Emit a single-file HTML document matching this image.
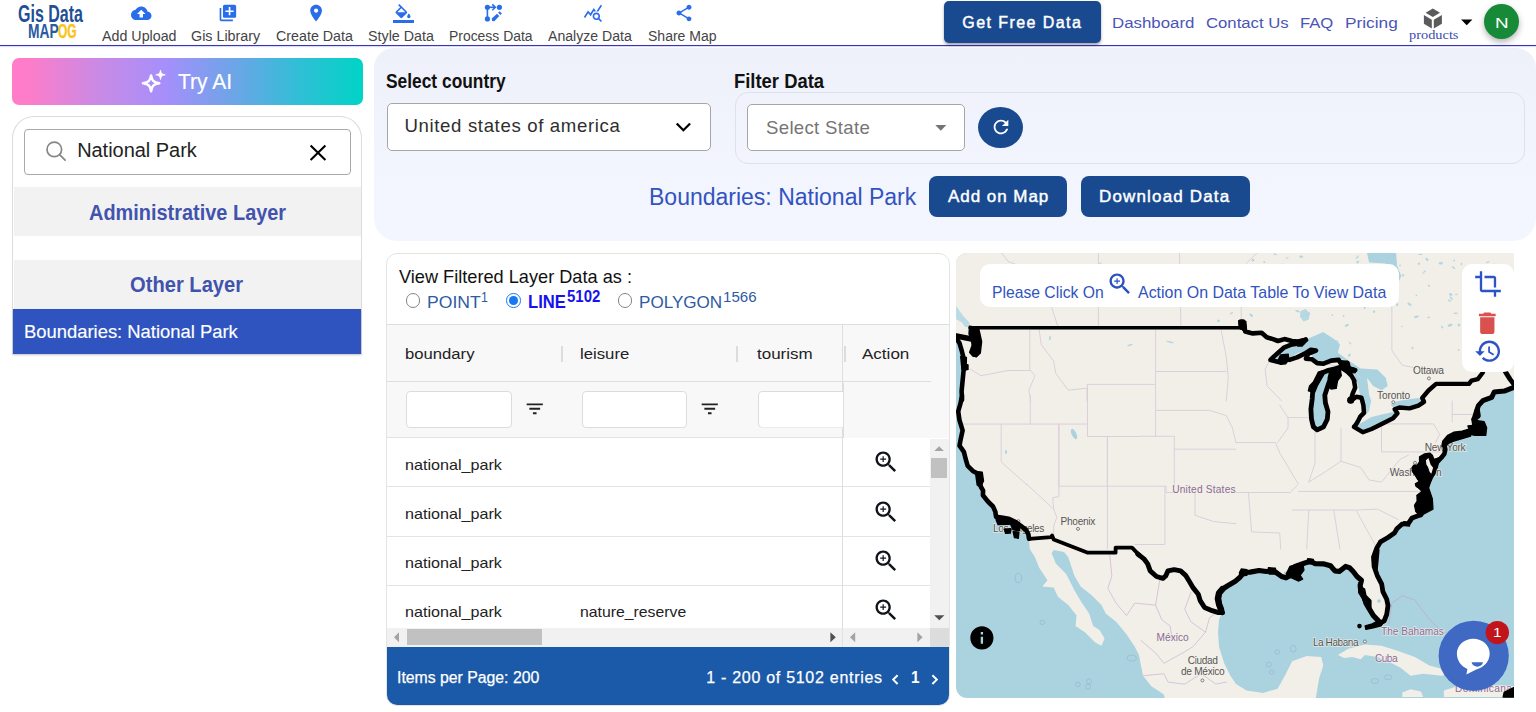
<!DOCTYPE html>
<html lang="en"><head><meta charset="utf-8"><title>GIS Data by MAPOG</title>
<style>
*{box-sizing:border-box}
html,body{margin:0;padding:0}
body{width:1536px;height:712px;overflow:hidden;background:#fff;position:relative;font-family:"Liberation Sans",sans-serif}
.t{position:absolute;white-space:nowrap;line-height:1;transform-origin:0 0;display:block}
.a{position:absolute}
svg{position:absolute;overflow:visible}

</style></head>
<body>
<!-- header -->
<div class="a" style="left:0;top:0;width:1536px;height:45px;background:#fff"></div>
<div class="a" style="left:0;top:44.6px;width:1536px;height:1.9px;background:#3737b6;box-shadow:0 0.5px 1px rgba(56,56,182,.4)"></div>
<!-- top filter panel -->
<div class="a" style="left:374px;top:47.6px;width:1162px;height:193.2px;border-radius:20px 20px 23px 23px;background:linear-gradient(180deg,#eef0fa 0%,#f3f5fe 60%,#f4f6ff 100%)"></div>
<!-- header right -->
<div class="a" style="left:944.2px;top:0.6px;width:156.4px;height:42px;border-radius:5px;background:#194a90;box-shadow:0 2px 3px rgba(0,0,0,.35)"></div>
<div class="a" style="left:1484.2px;top:4.2px;width:35px;height:35px;border-radius:50%;background:#178a38;box-shadow:0 3px 6px rgba(0,0,0,.3)"></div>
<!-- left column -->
<div class="a" style="left:12px;top:57.5px;width:350.5px;height:47.5px;border-radius:7px;background:linear-gradient(90deg,#ff7cc8 0%,#ff7cc8 4%,#c98ae6 25%,#a58ffb 44%,#6aa6e6 64%,#2fbfd6 82%,#00d4c6 100%)"></div>
<div class="a" style="left:12px;top:116px;width:350px;height:239px;border:1.5px solid #dcdcdc;border-bottom:none;border-radius:22px 22px 0 0;background:#fff"></div>
<div class="a" style="left:24px;top:128.6px;width:326.6px;height:46.4px;border:1px solid #a9a9a9;border-radius:4px;background:#fff"></div>
<div class="a" style="left:13.5px;top:187px;width:347.6px;height:49px;background:#f2f2f2"></div>
<div class="a" style="left:13.5px;top:260px;width:347.6px;height:49px;background:#f2f2f2"></div>
<div class="a" style="left:13px;top:309px;width:348.4px;height:45.4px;background:#3054bf;box-shadow:0 1px 2px rgba(0,0,0,.25)"></div>
<!-- select country -->
<div class="a" style="left:386.6px;top:103.4px;width:324.4px;height:47.2px;border:1px solid #a6a6a6;border-radius:5px;background:#fff"></div>
<!-- filter container -->
<div class="a" style="left:735.4px;top:92.2px;width:789.6px;height:71.4px;border:1px solid #dfe1ea;border-radius:13px"></div>
<div class="a" style="left:747.4px;top:104.4px;width:217.4px;height:46.8px;border:1px solid #a6a6a6;border-radius:5px;background:#fff"></div>
<div class="a" style="left:978.3px;top:106.9px;width:44.8px;height:41.2px;border-radius:50%;background:#194a90"></div>
<div class="a" style="left:929px;top:176.1px;width:138.2px;height:40.6px;border-radius:8px;background:#194a90"></div>
<div class="a" style="left:1080.8px;top:176.1px;width:168.8px;height:40.6px;border-radius:8px;background:#194a90"></div>
<!-- table card -->
<div class="a" style="left:386.2px;top:253px;width:563.6px;height:452.6px;border:1px solid #e4e4e4;border-radius:11px;background:#fff;overflow:hidden">
  <div class="a" style="left:0;top:70.4px;width:562px;height:114px;background:#f8f8f8;border-top:1px solid #dedede"></div>
  <div class="a" style="left:0;top:126.8px;width:544px;height:1px;background:#dedede"></div>
  <div class="a" style="left:0;top:183.1px;width:562px;height:1.2px;background:#e2e2e2"></div>
  <div class="a" style="left:0;top:232.3px;width:544px;height:1.2px;background:#e4e4e4"></div>
  <div class="a" style="left:0;top:281.5px;width:544px;height:1.2px;background:#e4e4e4"></div>
  <div class="a" style="left:0;top:330.7px;width:544px;height:1.2px;background:#e4e4e4"></div>
  <div class="a" style="left:455.2px;top:71px;width:1px;height:304px;background:#dedede"></div>
  <!-- header separators -->
  <div class="a" style="left:173.6px;top:92px;width:2px;height:16.4px;background:#dcdcdc"></div>
  <div class="a" style="left:348.6px;top:92px;width:2px;height:16.4px;background:#dcdcdc"></div>
  <div class="a" style="left:457px;top:92px;width:2px;height:16.4px;background:#dcdcdc"></div>
  <!-- filter inputs -->
  <div class="a" style="left:19.2px;top:136.6px;width:105.4px;height:37px;border:1px solid #dcdcdc;border-radius:4px;background:#fff"></div>
  <div class="a" style="left:194.4px;top:136.6px;width:105.4px;height:37px;border:1px solid #dcdcdc;border-radius:4px;background:#fff"></div>
  <div class="a" style="left:370.8px;top:136.6px;width:90px;height:37px;border:1px solid #dcdcdc;border-radius:4px 0 0 4px;background:#fff;clip-path:inset(0 5px 0 0)"></div>
  <div class="a" style="left:455.4px;top:128.6px;width:107px;height:55px;background:#f8f8f8;border-left:1px solid #dedede"></div>
  <!-- scrollbars -->
  <div class="a" style="left:543px;top:184.8px;width:19.2px;height:190px;background:#f1f1f1"></div>
  <div class="a" style="left:543.9px;top:204.2px;width:16.2px;height:19.4px;background:#c1c1c1"></div>
  <div class="a" style="left:0;top:374px;width:562px;height:19.4px;background:#f1f1f1"></div>
  <div class="a" style="left:19.8px;top:375px;width:134.8px;height:15.8px;background:#c1c1c1"></div>
  <div class="a" style="left:455.2px;top:374px;width:1px;height:19px;background:#e2e2e2"></div>
  <div class="a" style="left:543px;top:374px;width:19.2px;height:19.4px;background:#dcdcdc"></div>
  <!-- footer -->
  <div class="a" style="left:-1px;top:392.9px;width:566px;height:60px;background:#1b5aa8"></div>
</div>
<!-- map -->
<div class="a" style="left:956px;top:253px;width:557.7px;height:445.3px;border-radius:11px 0 0 11px;overflow:hidden;background:#aad3df">
<svg class="a" style="left:0;top:0" width="557.7" height="445.3" viewBox="956 253 557.7 445.3">
<path d="M955.0,252.0 L1515.0,252.0 L1515.0,386.0 L1513.8,387.3 L1504.3,391.1 L1494.2,392.0 L1491.7,397.4 L1482.9,400.6 L1478.4,405.6 L1475.9,413.2 L1474.0,419.5 L1477.2,423.1 L1476.0,420.0 L1470.0,432.0 L1462.0,436.0 L1471.5,430.2 L1463.9,433.4 L1453.8,435.9 L1444.9,440.3 L1444.9,439.7 L1443.7,442.9 L1444.9,450.5 L1442.4,456.8 L1437.3,461.8 L1433.6,464.4 L1434.2,469.4 L1432.9,475.7 L1428.5,485.9 L1427.2,490.9 L1431.0,500.0 L1432.3,499.0 L1432.9,509.1 L1423.4,514.1 L1420.9,514.8 L1412.1,517.9 L1408.3,523.6 L1401.9,524.2 L1396.9,528.7 L1394.4,533.1 L1388.0,537.5 L1380.5,541.9 L1376.7,548.3 L1373.5,557.1 L1374.1,566.0 L1375.4,570.0 L1377.2,550.0 L1374.1,557.6 L1374.1,566.4 L1377.2,575.3 L1381.7,584.1 L1382.9,591.7 L1386.7,599.3 L1388.0,605.6 L1386.7,614.5 L1384.2,620.8 L1378.5,624.0 L1378.5,620.8 L1373.4,615.7 L1369.6,609.4 L1365.9,603.1 L1364.0,596.8 L1360.8,591.7 L1360.2,585.4 L1361.4,580.3 L1357.0,576.5 L1353.2,571.5 L1349.4,567.7 L1345.6,566.4 L1339.3,571.5 L1334.9,570.9 L1330.5,565.8 L1324.1,563.9 L1315.3,563.7 L1310.2,561.1 L1301.4,564.2 L1295.1,566.4 L1294.3,569.0 L1291.8,574.7 L1286.1,577.8 L1281.7,576.5 L1276.6,572.8 L1272.9,570.5 L1266.5,571.5 L1259.0,570.5 L1250.1,572.1 L1243.8,572.5 L1240.0,577.2 L1234.9,581.6 L1227.3,586.0 L1222.3,589.2 L1219.1,593.0 L1218.5,598.0 L1219.1,604.4 L1221.0,609.4 L1222.3,612.6 L1222.1,612.4 L1219.0,619.7 L1218.0,632.2 L1219.0,646.7 L1224.2,663.3 L1230.4,675.8 L1236.0,684.1 L1246.4,690.4 L1263.0,692.9 L1277.6,688.7 L1284.9,675.8 L1292.1,661.3 L1306.7,656.1 L1321.2,657.1 L1323.3,665.4 L1319.2,677.9 L1316.0,697.0 L1316.0,702.8 L1285.0,700.0 L1160.0,700.0 L1166.0,702.8 L1163.9,694.5 L1151.4,686.2 L1143.1,675.8 L1141.0,665.4 L1139.0,655.0 L1134.8,646.7 L1126.5,634.2 L1116.1,621.8 L1105.7,613.4 L1101.5,605.1 L1091.1,594.7 L1080.7,586.4 L1074.5,576.0 L1068.3,557.3 L1064.1,552.1 L1053.7,550.0 L1051.6,553.2 L1055.8,563.6 L1066.2,573.9 L1071.4,584.3 L1074.5,590.6 L1080.7,601.0 L1089.1,613.4 L1093.2,625.9 L1099.5,630.1 L1104.6,638.4 L1101.5,645.7 L1095.3,642.6 L1084.9,632.2 L1075.5,625.9 L1076.6,615.5 L1068.3,605.1 L1057.9,596.8 L1053.7,587.5 L1042.3,586.4 L1047.5,580.2 L1039.2,567.7 L1035.0,557.3 L1029.8,549.0 L1029.0,538.8 L1028.4,534.4 L1025.9,529.9 L1020.8,525.8 L1015.7,522.0 L1008.4,518.7 L1003.1,517.9 L996.1,516.9 L995.3,511.6 L993.0,506.5 L987.9,501.5 L982.9,495.2 L983.1,490.7 L981.0,487.0 L979.7,482.5 L979.7,485.0 L978.4,474.0 L972.8,470.9 L967.7,465.8 L965.8,459.5 L963.9,451.9 L959.5,445.6 L960.7,439.2 L962.6,430.4 L959.5,420.3 L958.2,411.4 L960.7,402.6 L962.0,395.0 L962.0,400.0 L961.6,390.9 L962.6,380.8 L963.7,369.4 L963.3,357.0 L962.0,351.7 L959.5,343.1 L956.1,338.1 L955.0,336.0Z" fill="#f2efe9" />
<path d="M1306.7,339.3 L1323.3,332.0 L1335.8,340.3 L1340.0,344.5 L1337.9,352.8 L1349.3,361.1 L1340.0,359.0 L1323.3,363.2 L1315.0,361.1 L1308.8,350.7 L1298.4,352.8 L1288.0,359.0 L1275.5,361.1 L1270.3,360.1 L1285.9,346.6Z" fill="#aad3df" />
<path d="M1329.9,380.0 L1327.3,387.6 L1324.8,395.2 L1325.4,402.8 L1328.0,411.6 L1327.3,419.2 L1323.6,426.8 L1317.2,429.9 L1313.4,426.8 L1311.5,419.2 L1310.9,409.1 L1312.2,399.0 L1312.8,390.1 L1317.2,380.0 L1322.3,372.4 L1331.1,369.9Z" fill="#aad3df" />
<path d="M1349.3,361.1 L1360.7,368.4 L1377.4,369.4 L1385.7,377.7 L1387.8,386.1 L1381.5,390.2 L1373.2,386.1 L1367.0,377.7 L1369.1,394.4 L1371.1,401.0 L1369.1,411.0 L1362.8,417.2 L1360.7,401.0 L1358.7,388.1 L1355.5,377.7 L1352.4,371.5Z" fill="#aad3df" />
<path d="M1356.4,425.9 L1362.8,422.1 L1371.6,417.0 L1381.7,414.5 L1393.1,411.9 L1397.5,413.2 L1393.1,418.3 L1381.7,424.0 L1371.6,429.0 L1362.8,432.2Z" fill="#aad3df" />
<path d="M1390.6,404.4 L1396.9,401.2 L1408.3,399.3 L1418.4,398.0 L1422.2,398.0 L1424.1,401.8 L1418.4,405.6 L1409.5,408.4 L1399.4,407.5 L1394.6,409.2Z" fill="#aad3df" />
<path d="M1367.0,253.0 L1396.1,253.0 L1397.1,265.5 L1401.3,275.9 L1399.2,281.1 L1394.0,271.7 L1385.7,263.4 L1369.1,262.4Z" fill="#aad3df" />
<path d="M1300.4,311.2 L1305.6,309.1 L1309.8,313.3 L1308.8,319.5 L1303.6,321.6 L1300.0,316.4Z" fill="#b5d8e2" />
<path d="M1337.9,655.0 L1348.3,648.8 L1364.9,644.6 L1381.5,645.7 L1398.2,650.9 L1414.8,657.1 L1429.3,665.4 L1443.9,669.6 L1452.2,673.7 L1441.8,675.8 L1423.1,673.7 L1410.6,675.8 L1400.2,667.5 L1387.8,661.3 L1377.4,657.1 L1364.9,655.0 L1360.7,659.2 L1352.4,657.1 L1344.1,658.1Z" fill="#f2efe9" />
<path d="M1402.3,692.5 L1410.6,689.3 L1421.0,691.4 L1423.1,697.0 L1402.3,697.0Z" fill="#f2efe9" />
<path d="M1443.9,690.4 L1464.7,684.1 L1514.6,686.2 L1514.6,697.0 L1443.9,697.0Z" fill="#f2efe9" />
<ellipse cx="1282.2" cy="264.3" rx="2.0" ry="0.6" fill="#b3d7e2" transform="rotate(4 1282.2 264.3)"/>
<ellipse cx="1287.1" cy="257.9" rx="1.7" ry="0.5" fill="#b3d7e2" transform="rotate(-8 1287.1 257.9)"/>
<ellipse cx="1253.0" cy="260.2" rx="1.6" ry="1.2" fill="#b3d7e2" transform="rotate(-45 1253.0 260.2)"/>
<ellipse cx="1270.7" cy="296.7" rx="2.5" ry="1.0" fill="#b3d7e2" transform="rotate(-12 1270.7 296.7)"/>
<ellipse cx="1357.3" cy="257.2" rx="2.3" ry="0.7" fill="#b3d7e2" transform="rotate(-43 1357.3 257.2)"/>
<ellipse cx="1258.5" cy="275.0" rx="2.3" ry="0.6" fill="#b3d7e2" transform="rotate(10 1258.5 275.0)"/>
<ellipse cx="1318.5" cy="279.3" rx="1.8" ry="0.6" fill="#b3d7e2" transform="rotate(-53 1318.5 279.3)"/>
<ellipse cx="1268.7" cy="300.3" rx="1.6" ry="0.8" fill="#b3d7e2" transform="rotate(10 1268.7 300.3)"/>
<ellipse cx="1297.1" cy="274.4" rx="2.2" ry="1.1" fill="#b3d7e2" transform="rotate(-31 1297.1 274.4)"/>
<ellipse cx="1311.1" cy="289.7" rx="2.4" ry="1.1" fill="#b3d7e2" transform="rotate(-25 1311.1 289.7)"/>
<ellipse cx="1357.7" cy="262.0" rx="1.6" ry="1.1" fill="#b3d7e2" transform="rotate(-42 1357.7 262.0)"/>
<ellipse cx="1301.2" cy="256.7" rx="2.0" ry="1.1" fill="#b3d7e2" transform="rotate(9 1301.2 256.7)"/>
<ellipse cx="1345.7" cy="275.3" rx="2.1" ry="1.0" fill="#b3d7e2" transform="rotate(10 1345.7 275.3)"/>
<ellipse cx="1297.5" cy="311.1" rx="2.5" ry="0.9" fill="#b3d7e2" transform="rotate(20 1297.5 311.1)"/>
<ellipse cx="1252.0" cy="301.7" rx="2.0" ry="1.3" fill="#b3d7e2" transform="rotate(39 1252.0 301.7)"/>
<ellipse cx="1277.7" cy="280.2" rx="2.0" ry="0.5" fill="#b3d7e2" transform="rotate(-5 1277.7 280.2)"/>
<ellipse cx="1264.3" cy="262.0" rx="0.9" ry="1.1" fill="#b3d7e2" transform="rotate(-44 1264.3 262.0)"/>
<ellipse cx="1273.5" cy="280.6" rx="2.4" ry="0.6" fill="#b3d7e2" transform="rotate(-6 1273.5 280.6)"/>
<ellipse cx="1308.2" cy="314.1" rx="2.3" ry="1.2" fill="#b3d7e2" transform="rotate(-27 1308.2 314.1)"/>
<ellipse cx="1292.8" cy="278.4" rx="2.4" ry="1.3" fill="#b3d7e2" transform="rotate(-42 1292.8 278.4)"/>
<ellipse cx="1265.3" cy="269.8" rx="1.2" ry="0.9" fill="#b3d7e2" transform="rotate(11 1265.3 269.8)"/>
<ellipse cx="1275.2" cy="254.3" rx="1.6" ry="0.8" fill="#b3d7e2" transform="rotate(8 1275.2 254.3)"/>
<ellipse cx="1354.6" cy="301.0" rx="1.7" ry="1.0" fill="#b3d7e2" transform="rotate(21 1354.6 301.0)"/>
<ellipse cx="1251.2" cy="315.2" rx="2.2" ry="1.2" fill="#b3d7e2" transform="rotate(36 1251.2 315.2)"/>
<ellipse cx="1290.1" cy="281.1" rx="1.0" ry="1.0" fill="#b3d7e2" transform="rotate(-53 1290.1 281.1)"/>
<ellipse cx="1252.7" cy="268.2" rx="1.1" ry="0.8" fill="#b3d7e2" transform="rotate(-54 1252.7 268.2)"/>
<ellipse cx="1400.0" cy="265.5" rx="1.0" ry="0.8" fill="#b3d7e2" transform="rotate(-57 1400.0 265.5)"/>
<ellipse cx="1497.9" cy="300.7" rx="1.1" ry="0.7" fill="#b3d7e2" transform="rotate(-18 1497.9 300.7)"/>
<ellipse cx="1440.8" cy="263.3" rx="2.3" ry="1.3" fill="#b3d7e2" transform="rotate(-4 1440.8 263.3)"/>
<ellipse cx="1454.2" cy="260.5" rx="1.0" ry="0.8" fill="#b3d7e2" transform="rotate(-28 1454.2 260.5)"/>
<ellipse cx="1492.8" cy="266.3" rx="0.8" ry="1.3" fill="#b3d7e2" transform="rotate(3 1492.8 266.3)"/>
<ellipse cx="1416.4" cy="295.3" rx="0.8" ry="0.9" fill="#b3d7e2" transform="rotate(57 1416.4 295.3)"/>
<ellipse cx="1496.7" cy="306.9" rx="1.3" ry="0.8" fill="#b3d7e2" transform="rotate(-40 1496.7 306.9)"/>
<ellipse cx="1486.5" cy="294.5" rx="2.2" ry="0.8" fill="#b3d7e2" transform="rotate(-33 1486.5 294.5)"/>
<ellipse cx="1490.9" cy="328.9" rx="2.3" ry="1.1" fill="#b3d7e2" transform="rotate(38 1490.9 328.9)"/>
<ellipse cx="1482.9" cy="271.2" rx="1.7" ry="0.8" fill="#b3d7e2" transform="rotate(-57 1482.9 271.2)"/>
<ellipse cx="1403.1" cy="275.2" rx="1.3" ry="1.1" fill="#b3d7e2" transform="rotate(55 1403.1 275.2)"/>
<ellipse cx="1450.1" cy="325.2" rx="2.6" ry="1.3" fill="#b3d7e2" transform="rotate(-16 1450.1 325.2)"/>
<ellipse cx="1424.7" cy="271.2" rx="1.2" ry="0.7" fill="#b3d7e2" transform="rotate(15 1424.7 271.2)"/>
<ellipse cx="1500.8" cy="317.9" rx="1.7" ry="1.0" fill="#b3d7e2" transform="rotate(36 1500.8 317.9)"/>
<ellipse cx="1409.5" cy="304.2" rx="2.4" ry="1.1" fill="#b3d7e2" transform="rotate(30 1409.5 304.2)"/>
<ellipse cx="1453.5" cy="267.6" rx="2.2" ry="0.8" fill="#b3d7e2" transform="rotate(36 1453.5 267.6)"/>
<ellipse cx="1508.8" cy="284.1" rx="1.5" ry="1.3" fill="#b3d7e2" transform="rotate(27 1508.8 284.1)"/>
<ellipse cx="1419.0" cy="263.7" rx="1.1" ry="1.2" fill="#b3d7e2" transform="rotate(37 1419.0 263.7)"/>
<ellipse cx="1416.4" cy="316.8" rx="2.6" ry="1.0" fill="#b3d7e2" transform="rotate(-18 1416.4 316.8)"/>
<ellipse cx="1461.4" cy="264.0" rx="0.8" ry="1.3" fill="#b3d7e2" transform="rotate(18 1461.4 264.0)"/>
<ellipse cx="1459.0" cy="325.0" rx="1.6" ry="1.2" fill="#b3d7e2" transform="rotate(39 1459.0 325.0)"/>
<ellipse cx="1423.6" cy="273.1" rx="1.3" ry="0.7" fill="#b3d7e2" transform="rotate(10 1423.6 273.1)"/>
<ellipse cx="1429.0" cy="285.8" rx="1.0" ry="1.2" fill="#b3d7e2" transform="rotate(-18 1429.0 285.8)"/>
<ellipse cx="1451.3" cy="298.3" rx="2.4" ry="0.8" fill="#b3d7e2" transform="rotate(50 1451.3 298.3)"/>
<ellipse cx="1456.2" cy="294.4" rx="1.7" ry="0.5" fill="#b3d7e2" transform="rotate(-7 1456.2 294.4)"/>
<ellipse cx="1420.5" cy="254.3" rx="2.2" ry="0.6" fill="#b3d7e2" transform="rotate(-3 1420.5 254.3)"/>
<ellipse cx="1481.2" cy="296.3" rx="1.4" ry="0.9" fill="#b3d7e2" transform="rotate(7 1481.2 296.3)"/>
<ellipse cx="1487.8" cy="262.1" rx="1.8" ry="0.7" fill="#b3d7e2" transform="rotate(-27 1487.8 262.1)"/>
<ellipse cx="1486.5" cy="292.6" rx="1.8" ry="1.1" fill="#b3d7e2" transform="rotate(49 1486.5 292.6)"/>
<ellipse cx="1449.6" cy="300.6" rx="1.7" ry="0.9" fill="#b3d7e2" transform="rotate(23 1449.6 300.6)"/>
<ellipse cx="1450.7" cy="294.5" rx="1.7" ry="1.3" fill="#b3d7e2" transform="rotate(24 1450.7 294.5)"/>
<ellipse cx="1498.2" cy="325.6" rx="1.3" ry="0.9" fill="#b3d7e2" transform="rotate(53 1498.2 325.6)"/>
<ellipse cx="1494.1" cy="264.4" rx="1.0" ry="0.9" fill="#b3d7e2" transform="rotate(-51 1494.1 264.4)"/>
<ellipse cx="1427.0" cy="259.6" rx="2.0" ry="1.1" fill="#b3d7e2" transform="rotate(48 1427.0 259.6)"/>
<ellipse cx="1350.1" cy="343.0" rx="2.0" ry="0.6" fill="#b3d7e2" transform="rotate(46 1350.1 343.0)"/>
<ellipse cx="1455.8" cy="313.2" rx="2.5" ry="0.8" fill="#b3d7e2" transform="rotate(-2 1455.8 313.2)"/>
<ellipse cx="1458.7" cy="349.9" rx="1.1" ry="0.8" fill="#b3d7e2" transform="rotate(2 1458.7 349.9)"/>
<ellipse cx="1374.1" cy="311.7" rx="1.4" ry="1.1" fill="#b3d7e2" transform="rotate(-58 1374.1 311.7)"/>
<ellipse cx="1402.0" cy="326.4" rx="0.8" ry="0.8" fill="#b3d7e2" transform="rotate(15 1402.0 326.4)"/>
<ellipse cx="1396.6" cy="303.9" rx="2.6" ry="1.1" fill="#b3d7e2" transform="rotate(57 1396.6 303.9)"/>
<ellipse cx="1343.6" cy="315.9" rx="0.9" ry="1.1" fill="#b3d7e2" transform="rotate(-28 1343.6 315.9)"/>
<ellipse cx="1346.8" cy="325.3" rx="2.4" ry="1.2" fill="#b3d7e2" transform="rotate(-29 1346.8 325.3)"/>
<ellipse cx="1349.4" cy="355.2" rx="1.8" ry="1.1" fill="#b3d7e2" transform="rotate(-49 1349.4 355.2)"/>
<ellipse cx="1337.5" cy="341.3" rx="1.6" ry="0.6" fill="#b3d7e2" transform="rotate(53 1337.5 341.3)"/>
<ellipse cx="1412.5" cy="348.1" rx="1.0" ry="1.2" fill="#b3d7e2" transform="rotate(-52 1412.5 348.1)"/>
<ellipse cx="1442.2" cy="327.2" rx="1.4" ry="0.9" fill="#b3d7e2" transform="rotate(51 1442.2 327.2)"/>
<ellipse cx="1364.8" cy="307.8" rx="1.7" ry="0.7" fill="#b3d7e2" transform="rotate(-47 1364.8 307.8)"/>
<ellipse cx="1351.0" cy="303.0" rx="1.2" ry="0.7" fill="#b3d7e2" transform="rotate(-23 1351.0 303.0)"/>
<ellipse cx="1428.7" cy="317.4" rx="1.7" ry="0.6" fill="#b3d7e2" transform="rotate(-18 1428.7 317.4)"/>
<ellipse cx="1332.4" cy="315.0" rx="0.8" ry="1.1" fill="#b3d7e2" transform="rotate(6 1332.4 315.0)"/>
<ellipse cx="1176.1" cy="286.3" rx="2.5" ry="0.6" fill="#b3d7e2" transform="rotate(38 1176.1 286.3)"/>
<ellipse cx="1196.7" cy="287.7" rx="2.3" ry="0.8" fill="#b3d7e2" transform="rotate(1 1196.7 287.7)"/>
<ellipse cx="1218.5" cy="320.8" rx="1.4" ry="1.2" fill="#b3d7e2" transform="rotate(25 1218.5 320.8)"/>
<ellipse cx="1214.1" cy="281.5" rx="1.4" ry="0.5" fill="#b3d7e2" transform="rotate(-44 1214.1 281.5)"/>
<ellipse cx="1166.0" cy="304.4" rx="1.3" ry="0.6" fill="#b3d7e2" transform="rotate(-50 1166.0 304.4)"/>
<ellipse cx="1231.5" cy="313.2" rx="2.0" ry="0.7" fill="#b3d7e2" transform="rotate(-31 1231.5 313.2)"/>
<ellipse cx="1184.9" cy="285.2" rx="1.1" ry="0.9" fill="#b3d7e2" transform="rotate(-28 1184.9 285.2)"/>
<ellipse cx="1155.4" cy="298.7" rx="1.8" ry="0.7" fill="#b3d7e2" transform="rotate(56 1155.4 298.7)"/>
<ellipse cx="1077.1" cy="270.4" rx="0.8" ry="0.8" fill="#b3d7e2" transform="rotate(-3 1077.1 270.4)"/>
<ellipse cx="1100.3" cy="263.2" rx="1.7" ry="0.5" fill="#b3d7e2" transform="rotate(-28 1100.3 263.2)"/>
<ellipse cx="1050.8" cy="272.4" rx="0.9" ry="0.5" fill="#b3d7e2" transform="rotate(-23 1050.8 272.4)"/>
<ellipse cx="1067.9" cy="280.9" rx="1.8" ry="1.1" fill="#b3d7e2" transform="rotate(19 1067.9 280.9)"/>
<ellipse cx="1074.0" cy="434.0" rx="2.4" ry="5.6" fill="#aad3df" transform="rotate(-25 1074.0 434.0)"/>
<ellipse cx="1379.0" cy="601.0" rx="1.8" ry="1.8" fill="#aad3df" transform="rotate(0 1379.0 601.0)"/>
<ellipse cx="1006.0" cy="452.0" rx="1.2" ry="2.0" fill="#b3d7e2" transform="rotate(0 1006.0 452.0)"/>
<ellipse cx="1286.0" cy="573.0" rx="2.2" ry="1.4" fill="#aad3df" transform="rotate(0 1286.0 573.0)"/>
<ellipse cx="1130.0" cy="345.0" rx="3.0" ry="0.8" fill="#b3d7e2" transform="rotate(-20 1130.0 345.0)"/>
<ellipse cx="1170.0" cy="342.0" rx="4.0" ry="0.8" fill="#b3d7e2" transform="rotate(15 1170.0 342.0)"/>
<ellipse cx="1050.0" cy="338.0" rx="0.9" ry="2.4" fill="#b3d7e2" transform="rotate(10 1050.0 338.0)"/>
<path d="M956.1,305.4 L960.1,311.7 L963.9,316.8 L969.0,321.9 L970.2,326.9 L965.2,326.9 L961.4,321.9 L956.1,319.3Z" fill="#b9dbe5" />
<path d="M956.1,339.3 L957.8,343.1 L960.4,351.7 L961.6,357.0 L962.0,369.4 L961.1,380.8 L960.1,390.9 L960.4,401.0 L955.1,401.0 L955.1,339.3Z" fill="#aad3df" />
<path d="M962.6,424.1 L1087.8,424.1" fill="none" stroke="#dccfdc" stroke-width="1" stroke-linejoin="round" stroke-linecap="round" />
<path d="M1030.3,395.0 L1030.3,424.1" fill="none" stroke="#dccfdc" stroke-width="1" stroke-linejoin="round" stroke-linecap="round" />
<path d="M1001.2,424.1 L1001.2,462.0 L1027.1,485.0" fill="none" stroke="#dccfdc" stroke-width="1" stroke-linejoin="round" stroke-linecap="round" />
<path d="M1058.7,424.1 L1058.7,485.0" fill="none" stroke="#dccfdc" stroke-width="1" stroke-linejoin="round" stroke-linecap="round" />
<path d="M1087.5,384.9 L1087.5,436.5 L1140.0,436.5" fill="none" stroke="#dccfdc" stroke-width="1" stroke-linejoin="round" stroke-linecap="round" />
<path d="M1107.4,436.5 L1107.4,485.0" fill="none" stroke="#dccfdc" stroke-width="1" stroke-linejoin="round" stroke-linecap="round" />
<path d="M1058.9,423.9 L1058.9,496.6 L1052.7,497.7 L1053.7,509.1 L1056.8,517.4 L1053.7,525.7 L1053.7,536.1" fill="none" stroke="#dccfdc" stroke-width="1" stroke-linejoin="round" stroke-linecap="round" />
<path d="M1058.9,486.2 L1166.0,486.2 L1166.0,492.5 L1174.3,492.5" fill="none" stroke="#dccfdc" stroke-width="1" stroke-linejoin="round" stroke-linecap="round" />
<path d="M1107.4,436.3 L1107.4,549.0" fill="none" stroke="#dccfdc" stroke-width="1" stroke-linejoin="round" stroke-linecap="round" />
<path d="M1174.3,436.3 L1174.3,486.2" fill="none" stroke="#dccfdc" stroke-width="1" stroke-linejoin="round" stroke-linecap="round" />
<path d="M1174.3,449.2 L1236.0,449.2" fill="none" stroke="#dccfdc" stroke-width="1" stroke-linejoin="round" stroke-linecap="round" />
<path d="M1164.9,486.2 L1164.9,544.5 L1134.8,544.5" fill="none" stroke="#dccfdc" stroke-width="1" stroke-linejoin="round" stroke-linecap="round" />
<path d="M1155.6,401.0 L1155.6,436.3" fill="none" stroke="#dccfdc" stroke-width="1" stroke-linejoin="round" stroke-linecap="round" />
<path d="M1155.6,410.4 L1209.6,410.4 L1226.3,415.6 L1232.5,428.0 L1236.0,442.6" fill="none" stroke="#dccfdc" stroke-width="1" stroke-linejoin="round" stroke-linecap="round" />
<path d="M1195.1,492.5 L1195.1,515.3 L1213.8,521.6 L1236.0,523.7" fill="none" stroke="#dccfdc" stroke-width="1" stroke-linejoin="round" stroke-linecap="round" />
<path d="M1026.7,484.2 L1053.7,509.1" fill="none" stroke="#dccfdc" stroke-width="1" stroke-linejoin="round" stroke-linecap="round" />
<path d="M1140.0,436.3 L1174.3,436.3" fill="none" stroke="#dccfdc" stroke-width="1" stroke-linejoin="round" stroke-linecap="round" />
<path d="M1029.8,329.9 L1029.8,369.4 L1035.0,375.7 L1028.8,390.2 L1030.8,401.0" fill="none" stroke="#dccfdc" stroke-width="1" stroke-linejoin="round" stroke-linecap="round" />
<path d="M970.6,369.4 L980.9,375.7 L1008.0,370.5 L1029.8,370.5" fill="none" stroke="#dccfdc" stroke-width="1" stroke-linejoin="round" stroke-linecap="round" />
<path d="M1039.2,329.9 L1041.2,344.5 L1053.7,361.1 L1055.8,373.6 L1068.3,390.2 L1087.0,388.1 L1087.0,401.0" fill="none" stroke="#dccfdc" stroke-width="1" stroke-linejoin="round" stroke-linecap="round" />
<path d="M1087.0,384.4 L1155.6,384.4" fill="none" stroke="#dccfdc" stroke-width="1" stroke-linejoin="round" stroke-linecap="round" />
<path d="M1155.6,329.9 L1155.6,401.0" fill="none" stroke="#dccfdc" stroke-width="1" stroke-linejoin="round" stroke-linecap="round" />
<path d="M1155.6,371.5 L1226.3,371.5" fill="none" stroke="#dccfdc" stroke-width="1" stroke-linejoin="round" stroke-linecap="round" />
<path d="M1221.1,329.9 L1226.3,357.0 L1228.3,377.7 L1226.3,401.0" fill="none" stroke="#dccfdc" stroke-width="1" stroke-linejoin="round" stroke-linecap="round" />
<path d="M1098.4,253.0 L1098.4,326.8" fill="none" stroke="#dccfdc" stroke-width="1" stroke-linejoin="round" stroke-linecap="round" />
<path d="M1179.5,253.0 L1180.9,326.8" fill="none" stroke="#dccfdc" stroke-width="1" stroke-linejoin="round" stroke-linecap="round" />
<path d="M1001.7,253.0 L1008.0,261.3 L1018.4,265.5 L1051.6,307.1 L1057.9,326.8" fill="none" stroke="#dccfdc" stroke-width="1" stroke-linejoin="round" stroke-linecap="round" />
<path d="M1236.0,442.6 L1275.5,442.6 L1279.7,453.0 L1298.4,484.2 L1290.1,492.5 L1236.0,492.5" fill="none" stroke="#dccfdc" stroke-width="1" stroke-linejoin="round" stroke-linecap="round" />
<path d="M1279.7,405.2 L1288.0,417.6 L1288.0,428.0 L1277.6,442.6" fill="none" stroke="#dccfdc" stroke-width="1" stroke-linejoin="round" stroke-linecap="round" />
<path d="M1288.0,417.6 L1310.8,417.6" fill="none" stroke="#dccfdc" stroke-width="1" stroke-linejoin="round" stroke-linecap="round" />
<path d="M1315.0,430.1 L1315.0,463.4 L1308.8,482.1" fill="none" stroke="#dccfdc" stroke-width="1" stroke-linejoin="round" stroke-linecap="round" />
<path d="M1341.0,428.0 L1341.0,461.3 L1325.4,471.7 L1308.8,482.1" fill="none" stroke="#dccfdc" stroke-width="1" stroke-linejoin="round" stroke-linecap="round" />
<path d="M1381.5,423.9 L1381.5,451.9 L1443.9,451.9" fill="none" stroke="#dccfdc" stroke-width="1" stroke-linejoin="round" stroke-linecap="round" />
<path d="M1381.5,423.9 L1433.5,423.9 L1439.7,434.3 L1435.6,442.6" fill="none" stroke="#dccfdc" stroke-width="1" stroke-linejoin="round" stroke-linecap="round" />
<path d="M1341.0,461.3 L1360.7,467.5 L1369.1,480.0 L1381.5,482.1 L1400.2,459.2 L1408.6,455.1" fill="none" stroke="#dccfdc" stroke-width="1" stroke-linejoin="round" stroke-linecap="round" />
<path d="M1298.4,491.4 L1423.1,491.4" fill="none" stroke="#dccfdc" stroke-width="1" stroke-linejoin="round" stroke-linecap="round" />
<path d="M1292.1,510.1 L1356.6,510.1 L1377.4,509.1 L1398.2,519.5" fill="none" stroke="#dccfdc" stroke-width="1" stroke-linejoin="round" stroke-linecap="round" />
<path d="M1308.8,510.1 L1306.7,549.0" fill="none" stroke="#dccfdc" stroke-width="1" stroke-linejoin="round" stroke-linecap="round" />
<path d="M1333.7,510.1 L1340.0,549.0" fill="none" stroke="#dccfdc" stroke-width="1" stroke-linejoin="round" stroke-linecap="round" />
<path d="M1356.6,511.2 L1377.4,549.0" fill="none" stroke="#dccfdc" stroke-width="1" stroke-linejoin="round" stroke-linecap="round" />
<path d="M1248.5,492.5 L1251.6,532.0 L1279.7,533.0 L1280.7,549.0" fill="none" stroke="#dccfdc" stroke-width="1" stroke-linejoin="round" stroke-linecap="round" />
<path d="M1452.2,401.0 L1452.2,421.8" fill="none" stroke="#dccfdc" stroke-width="1" stroke-linejoin="round" stroke-linecap="round" />
<path d="M1452.2,414.5 L1473.0,414.5" fill="none" stroke="#dccfdc" stroke-width="1" stroke-linejoin="round" stroke-linecap="round" />
<path d="M1269.3,361.1 L1265.1,369.4 L1267.2,386.1 L1281.7,401.0" fill="none" stroke="#dccfdc" stroke-width="1" stroke-linejoin="round" stroke-linecap="round" />
<path d="M1323.3,363.2 L1352.4,369.4 L1360.7,377.7" fill="none" stroke="#dccfdc" stroke-width="1" stroke-linejoin="round" stroke-linecap="round" />
<path d="M1391.9,305.0 L1391.9,350.7 L1402.3,365.3 L1412.7,367.3" fill="none" stroke="#dccfdc" stroke-width="1" stroke-linejoin="round" stroke-linecap="round" />
<path d="M1241.2,307.1 L1241.2,321.6" fill="none" stroke="#dccfdc" stroke-width="1" stroke-linejoin="round" stroke-linecap="round" />
<path d="M1256.8,253.0 L1246.4,263.4" fill="none" stroke="#dccfdc" stroke-width="1" stroke-linejoin="round" stroke-linecap="round" />
<path d="M1109.8,555.2 L1111.9,576.0 L1107.8,588.5 L1116.1,603.1 L1126.5,615.5" fill="none" stroke="#d9c3d9" stroke-width="1" stroke-linejoin="round" stroke-linecap="round" />
<path d="M1126.5,615.5 L1134.8,603.1 L1155.6,605.1 L1161.8,619.7 L1170.1,625.9 L1172.2,640.5" fill="none" stroke="#d9c3d9" stroke-width="1" stroke-linejoin="round" stroke-linecap="round" />
<path d="M1155.6,605.1 L1159.7,580.2 L1166.0,576.0" fill="none" stroke="#d9c3d9" stroke-width="1" stroke-linejoin="round" stroke-linecap="round" />
<path d="M1190.9,592.7 L1184.7,609.3 L1190.9,621.8 L1205.5,632.2 L1209.6,617.6 L1215.9,613.4" fill="none" stroke="#d9c3d9" stroke-width="1" stroke-linejoin="round" stroke-linecap="round" />
<path d="M1141.0,640.5 L1155.6,653.0 L1163.9,663.3 L1182.6,653.0 L1193.0,646.7 L1205.5,632.2" fill="none" stroke="#d9c3d9" stroke-width="1" stroke-linejoin="round" stroke-linecap="round" />
<path d="M1143.1,675.8 L1163.9,673.7 L1168.1,682.1 L1184.7,684.1 L1201.3,673.7 L1215.9,684.1 L1226.3,682.1" fill="none" stroke="#d9c3d9" stroke-width="1" stroke-linejoin="round" stroke-linecap="round" />
<ellipse cx="1018.4" cy="578.1" rx="3.3" ry="4.6" fill="none" stroke="#9db8cf" stroke-width="0.8"/>
<ellipse cx="1042.3" cy="622.4" rx="2.3" ry="2.3" fill="none" stroke="#9db8cf" stroke-width="0.8"/>
<ellipse cx="1078.0" cy="684.6" rx="2.3" ry="2.3" fill="none" stroke="#9db8cf" stroke-width="0.8"/>
<ellipse cx="1089.1" cy="681.4" rx="2.5" ry="2.5" fill="none" stroke="#9db8cf" stroke-width="0.8"/>
<ellipse cx="1088.0" cy="686.6" rx="2.5" ry="2.5" fill="none" stroke="#9db8cf" stroke-width="0.8"/>
<ellipse cx="1131.7" cy="658.1" rx="4.6" ry="2.9" fill="none" stroke="#9db8cf" stroke-width="0.8"/>
<ellipse cx="1293.2" cy="648.8" rx="2.9" ry="3.3" fill="none" stroke="#9db8cf" stroke-width="0.8"/>
<ellipse cx="1277.2" cy="652.1" rx="2.3" ry="2.3" fill="none" stroke="#9db8cf" stroke-width="0.8"/>
<ellipse cx="1268.8" cy="664.6" rx="2.5" ry="2.5" fill="none" stroke="#9db8cf" stroke-width="0.8"/>
<ellipse cx="1271.8" cy="672.1" rx="2.3" ry="2.3" fill="none" stroke="#9db8cf" stroke-width="0.8"/>
<ellipse cx="1374.9" cy="681.0" rx="3.7" ry="2.5" fill="none" stroke="#9db8cf" stroke-width="0.8"/>
<ellipse cx="1388.2" cy="677.3" rx="3.7" ry="2.5" fill="none" stroke="#9db8cf" stroke-width="0.8"/>
<path d="M1388.8,623.8 L1391.9,603.1 L1402.3,595.8 L1414.8,599.9 L1423.1,611.4 L1433.5,623.8 L1443.9,632.2 L1456.4,636.3" fill="none" stroke="#b9b3cf" stroke-width="0.9" stroke-linejoin="round" stroke-linecap="round" />
<text x="1172.2" y="492.6" textLength="63.4" lengthAdjust="spacing" font-family="&quot;Liberation Sans&quot;,sans-serif" font-size="10.2" fill="#8d6b95" stroke="#f2efe9" stroke-opacity=".75" stroke-width="1.6" paint-order="stroke">United States</text>
<text x="1060.6" y="525.4" textLength="34.7" lengthAdjust="spacing" font-family="&quot;Liberation Sans&quot;,sans-serif" font-size="10.2" fill="#555" stroke="#f2efe9" stroke-opacity=".75" stroke-width="1.6" paint-order="stroke">Phoenix</text>
<text x="993.0" y="532.5" textLength="51.4" lengthAdjust="spacing" font-family="&quot;Liberation Sans&quot;,sans-serif" font-size="10.2" fill="#555" stroke="#f2efe9" stroke-opacity=".75" stroke-width="1.6" paint-order="stroke">Los Angeles</text>
<text x="1413.1" y="373.7" textLength="30.8" lengthAdjust="spacing" font-family="&quot;Liberation Sans&quot;,sans-serif" font-size="10.2" fill="#555" stroke="#f2efe9" stroke-opacity=".75" stroke-width="1.6" paint-order="stroke">Ottawa</text>
<text x="1377.0" y="399.3" textLength="33.2" lengthAdjust="spacing" font-family="&quot;Liberation Sans&quot;,sans-serif" font-size="10.2" fill="#555" stroke="#f2efe9" stroke-opacity=".75" stroke-width="1.6" paint-order="stroke">Toronto</text>
<text x="1424.8" y="451.0" textLength="40.9" lengthAdjust="spacing" font-family="&quot;Liberation Sans&quot;,sans-serif" font-size="10.2" fill="#555" stroke="#f2efe9" stroke-opacity=".75" stroke-width="1.6" paint-order="stroke">New York</text>
<text x="1389.8" y="475.9" textLength="52.0" lengthAdjust="spacing" font-family="&quot;Liberation Sans&quot;,sans-serif" font-size="10.2" fill="#555" stroke="#f2efe9" stroke-opacity=".75" stroke-width="1.6" paint-order="stroke">Washington</text>
<text x="1156.6" y="641.0" textLength="32.2" lengthAdjust="spacing" font-family="&quot;Liberation Sans&quot;,sans-serif" font-size="10.2" fill="#8d6b95" stroke="#f2efe9" stroke-opacity=".75" stroke-width="1.6" paint-order="stroke">México</text>
<text x="1187.8" y="664.1" textLength="30.2" lengthAdjust="spacing" font-family="&quot;Liberation Sans&quot;,sans-serif" font-size="10.2" fill="#555" stroke="#f2efe9" stroke-opacity=".75" stroke-width="1.6" paint-order="stroke">Ciudad</text>
<text x="1181.0" y="675.3" textLength="43.8" lengthAdjust="spacing" font-family="&quot;Liberation Sans&quot;,sans-serif" font-size="10.2" fill="#555" stroke="#f2efe9" stroke-opacity=".75" stroke-width="1.6" paint-order="stroke">de México</text>
<text x="1312.9" y="645.8" textLength="45.8" lengthAdjust="spacing" font-family="&quot;Liberation Sans&quot;,sans-serif" font-size="10.2" fill="#555" stroke="#f2efe9" stroke-opacity=".75" stroke-width="1.6" paint-order="stroke">La Habana</text>
<text x="1381.1" y="635.0" textLength="62.8" lengthAdjust="spacing" font-family="&quot;Liberation Sans&quot;,sans-serif" font-size="10.2" fill="#8d6b95" stroke="#f2efe9" stroke-opacity=".75" stroke-width="1.6" paint-order="stroke">The Bahamas</text>
<text x="1374.9" y="662.0" textLength="22.8" lengthAdjust="spacing" font-family="&quot;Liberation Sans&quot;,sans-serif" font-size="10.2" fill="#8d6b95" stroke="#f2efe9" stroke-opacity=".75" stroke-width="1.6" paint-order="stroke">Cuba</text>
<text x="1455.0" y="692.0" textLength="57.0" lengthAdjust="spacing" font-family="&quot;Liberation Sans&quot;,sans-serif" font-size="10.2" fill="#8d6b95" stroke="#f2efe9" stroke-opacity=".75" stroke-width="1.6" paint-order="stroke">Dominicana</text>
<circle cx="1428.9" cy="378.4" r="1.5" fill="#f2efe9" stroke="#666" stroke-width="0.8"/>
<circle cx="1393.3" cy="402.2" r="1.5" fill="#f2efe9" stroke="#666" stroke-width="0.8"/>
<circle cx="1078" cy="528.9" r="1.5" fill="#f2efe9" stroke="#666" stroke-width="0.8"/>
<circle cx="1018.4" cy="521.2" r="1.5" fill="#f2efe9" stroke="#666" stroke-width="0.8"/>
<circle cx="1202.4" cy="680.4" r="1.5" fill="#f2efe9" stroke="#666" stroke-width="0.8"/>
<circle cx="1364.9" cy="641.5" r="1.5" fill="#f2efe9" stroke="#666" stroke-width="0.8"/>
<circle cx="1415" cy="462.8" r="1.5" fill="#f2efe9" stroke="#666" stroke-width="0.8"/>
<path d="M970.0,327.7 L1241.4,327.7" fill="none" stroke="#000" stroke-width="3.6" stroke-linejoin="round" stroke-linecap="round" />
<path d="M1355.2,370.1 L1348.8,368.2 L1347.6,363.1 L1341.3,364.4 L1338.7,359.9 L1331.1,360.6 L1323.6,363.7 L1317.2,363.1 L1312.2,359.3 L1305.9,358.7 L1308.4,353.6 L1316.0,350.5 L1310.9,349.8 L1304.6,353.6 L1297.0,357.4 L1289.4,359.9 L1284.4,358.0 L1280.6,362.5 L1270.5,359.9 L1273.0,357.4 L1279.3,351.7 L1284.4,347.3 L1290.7,344.8 L1298.3,343.5 L1305.9,339.7 L1298.3,341.6 L1291.9,341.0 L1284.4,339.1 L1278.0,341.0 L1273.0,339.1 L1266.7,337.2 L1261.6,332.8 L1252.8,333.4 L1245.2,331.5 L1244.5,326.4 L1243.3,321.6 L1240.7,321.6 L1241.4,327.7" fill="none" stroke="#000" stroke-width="4.6" stroke-linejoin="round" stroke-linecap="round" />
<path d="M1341.3,367.5 L1334.9,369.4 L1331.1,373.2 L1329.9,378.3 L1329.9,380.0 L1327.3,387.6 L1324.8,395.2 L1325.4,402.8 L1328.0,411.6 L1327.3,419.2 L1323.6,426.8 L1317.2,429.9 L1313.4,426.8 L1311.5,419.2 L1310.9,409.1 L1312.2,399.0 L1312.8,390.1 L1317.2,380.0 L1318.5,378.3 L1321.0,373.2 L1327.3,370.7 L1334.9,368.8 L1341.3,366.9" fill="none" stroke="#000" stroke-width="4.8" stroke-linejoin="round" stroke-linecap="round" />
<path d="M1354.5,426.8 L1357.7,421.7 L1360.2,416.7 L1364.0,412.9 L1363.4,405.3 L1361.5,397.7 L1356.4,396.7 L1353.3,399.0 L1350.7,400.9 L1352.6,393.9 L1355.2,387.6 L1353.9,380.0 L1354.5,380.8 L1351.4,375.7 L1347.6,371.9 L1341.3,367.5" fill="none" stroke="#000" stroke-width="4.5" stroke-linejoin="round" stroke-linecap="round" />
<path d="M1482.9,372.5 L1477.8,379.1 L1471.5,380.6 L1469.0,383.9 L1436.1,383.9 L1428.5,390.5 L1422.2,398.0 L1424.1,401.8 L1418.4,405.6 L1409.5,408.4 L1399.4,407.5 L1394.6,409.2 L1397.5,413.2 L1393.1,418.3 L1381.7,424.0 L1371.6,429.0 L1362.8,432.2 L1353.9,426.9" fill="none" stroke="#000" stroke-width="4.4" stroke-linejoin="round" stroke-linecap="round" />
<path d="M1513.8,384.1 L1510.0,379.1 L1505.6,372.1 L1503.1,367.7" fill="none" stroke="#000" stroke-width="4.8" stroke-linejoin="round" stroke-linecap="round" />
<path d="M1477.2,423.1 L1474.0,419.5 L1475.9,413.2 L1478.4,405.6 L1482.9,400.6 L1491.7,397.4 L1494.2,392.0 L1504.3,391.1 L1513.8,387.3" fill="none" stroke="#000" stroke-width="5.0" stroke-linejoin="round" stroke-linecap="round" />
<path d="M1378.5,624.0 L1384.2,620.8 L1386.7,614.5 L1388.0,605.6 L1386.7,599.3 L1382.9,591.7 L1381.7,584.1 L1377.2,575.3 L1374.1,566.4 L1374.1,557.6 L1377.2,550.0 L1375.4,570.0 L1374.1,566.0 L1373.5,557.1 L1376.7,548.3 L1380.5,541.9 L1388.0,537.5 L1394.4,533.1 L1396.9,528.7 L1401.9,524.2 L1408.3,523.6 L1412.1,517.9 L1420.9,514.8" fill="none" stroke="#000" stroke-width="4.8" stroke-linejoin="round" stroke-linecap="round" />
<path d="M1222.3,612.6 L1221.0,609.4 L1219.1,604.4 L1218.5,598.0 L1219.1,593.0 L1222.3,589.2 L1227.3,586.0 L1234.9,581.6 L1240.0,577.2 L1243.8,572.5 L1250.1,572.1 L1259.0,570.5 L1266.5,571.5 L1272.9,570.5 L1276.6,572.8 L1281.7,576.5 L1286.1,577.8 L1291.8,574.7 L1294.3,569.0 L1295.1,566.4 L1301.4,564.2 L1310.2,561.1 L1315.3,563.7 L1324.1,563.9 L1330.5,565.8 L1334.9,570.9 L1339.3,571.5 L1345.6,566.4 L1349.4,567.7 L1353.2,571.5 L1357.0,576.5 L1361.4,580.3 L1360.2,585.4 L1360.8,591.7 L1364.0,596.8 L1365.9,603.1 L1369.6,609.4 L1373.4,615.7 L1378.5,620.8" fill="none" stroke="#000" stroke-width="5.2" stroke-linejoin="round" stroke-linecap="round" />
<path d="M1029.0,538.8 L1051.1,537.1 L1052.1,535.6 L1053.7,539.4 L1087.8,552.7 L1115.6,552.7 L1115.6,547.6 L1132.0,547.6 L1140.0,555.9" fill="none" stroke="#000" stroke-width="3.8" stroke-linejoin="round" stroke-linecap="round" />
<path d="M1140.0,555.9 L1137.6,553.8 L1143.9,558.8 L1147.7,563.9 L1150.2,570.9 L1156.5,576.5 L1162.9,578.4 L1165.7,575.9 L1167.9,570.9 L1174.2,569.6 L1180.6,570.9 L1185.6,575.3 L1189.4,581.6 L1193.2,587.9 L1198.3,594.2 L1200.2,600.6 L1204.6,607.5 L1212.2,610.7 L1218.5,612.6 L1222.3,612.6" fill="none" stroke="#000" stroke-width="4.9" stroke-linejoin="round" stroke-linecap="round" />
<path d="M956.1,338.1 L959.5,343.1 L962.0,351.7 L963.3,357.0 L963.7,369.4 L962.6,380.8 L961.6,390.9 L962.0,400.0 L962.0,395.0 L960.7,402.6 L958.2,411.4 L959.5,420.3 L962.6,430.4 L960.7,439.2 L959.5,445.6 L963.9,451.9 L965.8,459.5 L967.7,465.8 L972.8,470.9 L978.4,474.0 L979.7,485.0 L979.7,482.5 L981.0,487.0 L983.1,490.7 L982.9,495.2 L987.9,501.5 L993.0,506.5 L995.3,511.6 L996.1,516.9 L1003.1,517.9 L1008.4,518.7 L1015.7,522.0 L1020.8,525.8 L1025.9,529.9 L1028.4,534.4 L1029.0,538.8" fill="none" stroke="#000" stroke-width="4.6" stroke-linejoin="round" stroke-linecap="round" />
<path d="M971.5,339.1 L956.1,335.9" fill="none" stroke="#000" stroke-width="5.6" stroke-linejoin="round" stroke-linecap="round" />
<path d="M969.6,326.2 L978.4,327.7 L979.7,332.8 L981.6,341.6 L980.3,353.0 L976.5,356.8 L972.8,356.1 L969.6,352.4 L972.1,345.4 L971.5,339.7 L969.0,334.0Z" fill="#000" stroke="#000" stroke-width="1.4" stroke-linejoin="round"/>
<path d="M1318.5,371.9 L1326.1,370.4 L1317.2,385.9 L1314.7,392.2 L1308.4,390.9 L1309.6,385.9 L1313.4,382.1Z" fill="#000" stroke="#000" stroke-width="1.4" stroke-linejoin="round"/>
<path d="M1331.1,369.4 L1340.0,367.5 L1341.3,375.7 L1337.5,380.8 L1336.2,388.4 L1331.1,389.0 L1327.3,385.9 L1329.9,378.3 L1331.1,373.2Z" fill="#000" stroke="#000" stroke-width="1.4" stroke-linejoin="round"/>
<path d="M1338.7,360.6 L1347.6,361.2 L1349.5,366.9 L1355.8,368.8 L1355.2,372.6 L1348.8,373.2 L1341.3,369.4Z" fill="#000" stroke="#000" stroke-width="1.4" stroke-linejoin="round"/>
<path d="M1280.6,354.9 L1288.2,354.2 L1288.8,359.9 L1285.6,363.7 L1280.6,364.4 L1278.0,360.6Z" fill="#000" stroke="#000" stroke-width="1.4" stroke-linejoin="round"/>
<path d="M1298.3,340.3 L1305.9,337.8 L1307.7,340.3 L1302.1,346.0 L1297.6,346.0Z" fill="#000" stroke="#000" stroke-width="1.4" stroke-linejoin="round"/>
<circle cx="1350.7" cy="400.2" r="3.6" fill="#000"/>
<path d="M1468.0,426.0 L1474.8,425.2 L1473.9,420.1 L1479.0,421.0 L1484.1,421.8 L1486.6,427.7 L1485.7,435.3 L1474.8,435.3 L1470.6,434.4 L1469.7,431.1Z" fill="#000" stroke="#000" stroke-width="1.4" stroke-linejoin="round"/>
<path d="M1474.8,425.6 L1473.9,419.3 L1478.2,415.9 L1477.3,410.0" fill="none" stroke="#000" stroke-width="5.2" stroke-linejoin="round" stroke-linecap="round" />
<path d="M1442.8,441.2 L1447.8,435.3 L1453.7,432.3 L1462.1,431.1 L1468.0,429.4 L1470.6,431.1 L1470.6,436.1 L1462.1,438.7 L1453.7,441.2 L1447.8,443.7 L1445.7,447.1 L1442.1,446.2Z" fill="#000" stroke="#000" stroke-width="1.4" stroke-linejoin="round"/>
<path d="M1444.0,443.7 L1445.3,449.6 L1444.4,453.8 L1441.1,458.0 L1436.9,462.3 L1435.6,467.3" fill="none" stroke="#000" stroke-width="4.6" stroke-linejoin="round" stroke-linecap="round" />
<path d="M1419.6,456.9 L1424.7,453.9 L1429.7,453.1 L1432.3,455.2 L1433.9,459.4 L1437.3,458.5 L1440.7,456.9 L1439.0,461.9 L1436.5,465.3 L1436.5,467.8 L1434.8,473.7 L1432.3,477.9 L1429.7,483.8 L1428.0,488.9 L1429.7,493.9 L1432.3,500.0 L1417.1,500.0 L1417.1,495.6 L1422.1,493.9 L1424.7,489.7 L1420.5,488.9 L1416.2,486.4 L1415.4,483.8 L1419.6,481.3 L1417.9,479.6 L1415.4,475.4 L1412.9,472.0 L1412.0,467.8 L1413.7,465.3 L1417.1,465.3 L1419.6,461.9Z" fill="#000" stroke="#000" stroke-width="1.4" stroke-linejoin="round"/>
<path d="M1425.9,460.2 L1428.5,458.1 L1430.6,464.4 L1433.1,467.8 L1431.4,473.7 L1429.7,472.0 L1428.0,467.0 L1426.4,464.4Z" fill="#f2efe9" />
<path d="M1420.9,480.0 L1431.0,480.0 L1428.5,487.6 L1432.3,499.0 L1432.9,509.1 L1423.4,514.1 L1420.9,516.7 L1415.9,511.6 L1414.6,505.3 L1418.4,499.0 L1417.1,495.2 L1422.2,491.4 L1415.9,485.1Z" fill="#000" stroke="#000" stroke-width="1.4" stroke-linejoin="round"/>
<path d="M1290.0,566.4 L1302.6,562.6 L1303.9,570.2 L1300.1,575.3 L1302.6,579.1 L1298.8,581.0 L1290.0,577.2 L1286.2,574.0 L1288.7,569.0Z" fill="#000" stroke="#000" stroke-width="1.4" stroke-linejoin="round"/>
<path d="M1377.2,621.4 L1384.2,620.8 L1381.0,625.9 L1373.4,627.7 L1365.9,629.4 L1365.2,625.9 L1372.2,624.0Z" fill="#000" stroke="#000" stroke-width="1.4" stroke-linejoin="round"/>
<circle cx="1359.5" cy="626.1" r="2.3" fill="#000"/>
<path d="M1358.9,585.4 L1364.6,589.2 L1365.9,595.5 L1370.9,600.6 L1370.9,609.4 L1365.9,605.6 L1362.1,598.0 L1358.9,593.0Z" fill="#000" stroke="#000" stroke-width="1.4" stroke-linejoin="round"/>
<path d="M996.1,519.8 L1009.4,519.4 L1009.4,524.2 L998.0,524.5Z" fill="#000" stroke="#000" stroke-width="1.4" stroke-linejoin="round"/>
<path d="M1009.4,521.7 L1019.5,523.0 L1019.5,530.6 L1013.2,529.9Z" fill="#000" stroke="#000" stroke-width="1.4" stroke-linejoin="round"/>
<path d="M1004.4,529.1 L1010.7,528.7 L1010.4,533.1 L1005.6,533.4Z" fill="#000" stroke="#000" stroke-width="1.4" stroke-linejoin="round"/>
<path d="M1013.2,531.8 L1018.9,532.1 L1018.3,538.2 L1014.5,537.5Z" fill="#000" stroke="#000" stroke-width="1.4" stroke-linejoin="round"/>
<path d="M975.3,471.5 L982.2,472.1 L983.5,481.0 L981.0,486.0 L977.2,485.0Z" fill="#000" stroke="#000" stroke-width="1.4" stroke-linejoin="round"/>
<path d="M960.7,356.8 L966.4,357.4 L966.2,364.4 L968.0,365.0 L968.0,369.4 L965.2,370.1 L962.0,369.4Z" fill="#000" stroke="#000" stroke-width="1.4" stroke-linejoin="round"/>
<path d="M1504.2,692.5 L1514.6,687.3 L1514.6,697.0 L1503.2,697.0Z" fill="#000" stroke="#000" stroke-width="1.4" stroke-linejoin="round"/>
<path d="M1241.3,569.0 L1246.9,569.6 L1246.9,575.3 L1241.3,575.9 L1239.4,572.8Z" fill="#000" stroke="#000" stroke-width="1.4" stroke-linejoin="round"/>
<path d="M1268.4,567.7 L1275.4,568.3 L1276.0,574.0 L1269.1,574.0Z" fill="#000" stroke="#000" stroke-width="1.4" stroke-linejoin="round"/>
<path d="M1222.3,589.2 L1219.1,593.0 L1217.9,598.7 L1219.1,604.4 L1221.0,609.4" fill="none" stroke="#000" stroke-width="6.4" stroke-linejoin="round" stroke-linecap="round" />
<path d="M1307.7,558.8 L1313.4,559.5 L1312.8,563.9 L1307.7,563.9Z" fill="#000" stroke="#000" stroke-width="1.4" stroke-linejoin="round"/>
<path d="M1403.8,521.7 L1408.9,522.4 L1409.5,526.1 L1405.7,525.5Z" fill="#000" stroke="#000" stroke-width="1.4" stroke-linejoin="round"/>
<path d="M1238.8,320.7 L1245.8,321.4 L1246.2,329.0 L1242.6,330.2 L1242.0,326.4 L1239.1,326.2Z" fill="#000" stroke="#000" stroke-width="1.4" stroke-linejoin="round"/>
</svg>

</div>
<!-- map overlays -->
<div class="a" style="left:980px;top:264px;width:419.4px;height:43px;border-radius:10px;background:#fff"></div>
<div class="a" style="left:1462px;top:264px;width:51.8px;height:108px;border-radius:10px;background:#fff"></div>
<!-- nav icons -->
<svg style="left:130.7px;top:2.6px" width="20.5" height="20.5" viewBox="0 0 24 24" fill="#2a6dea"><path d="M19.35 10.04C18.67 6.59 15.64 4 12 4 9.11 4 6.6 5.64 5.35 8.04 2.34 8.36 0 10.91 0 14c0 3.31 2.69 6 6 6h13c2.76 0 5-2.24 5-5 0-2.64-2.05-4.78-4.65-4.96zM14 13v4h-4v-4H7l5-5 5 5h-3z"/></svg>
<svg style="left:218.3px;top:3.1px" width="19.8" height="19.8" viewBox="0 0 24 24" fill="#2a6dea"><path d="M4 6H2v14c0 1.1.9 2 2 2h14v-2H4V6zm16-4H8c-1.1 0-2 .9-2 2v12c0 1.1.9 2 2 2h12c1.1 0 2-.9 2-2V4c0-1.1-.9-2-2-2zm-1 9h-4v4h-2v-4H9V9h4V5h2v4h4v2z"/></svg>
<svg style="left:306.4px;top:3px" width="20.2" height="20.2" viewBox="0 0 24 24" fill="#2a6dea"><path d="M12 2C8.13 2 5 5.13 5 9c0 5.25 7 13 7 13s7-7.75 7-13c0-3.87-3.13-7-7-7zm0 9.500c-1.38 0-2.500-1.120-2.500-2.500s1.120-2.500 2.500-2.500 2.500 1.120 2.500 2.500-1.120 2.500-2.500 2.500z"/></svg>
<svg style="left:393.4px;top:3.6px" width="20" height="20" viewBox="0 0 24 24" fill="#2a6dea"><path d="M16.56 8.94L7.62 0 6.21 1.41l2.38 2.38-5.15 5.15c-.59.59-.59 1.54 0 2.12l5.5 5.5c.29.29.68.44 1.060.44s.77-.15 1.060-.44l5.5-5.5c.59-.58.59-1.530 0-2.120zM5.21 10L10 5.210 14.790 10H5.210zM19 11.500s-2 2.170-2 3.500c0 1.100.9 2 2 2s2-.9 2-2c0-1.330-2-3.500-2-3.500z"/></svg>
<div class="a" style="left:393.3px;top:20.1px;width:20.7px;height:2.9px;background:#2a6dea"></div>
<svg style="left:483px;top:2px" width="22" height="22" viewBox="483 2 22 22"><g fill="#2a6dea"><circle cx="487.4" cy="7.3" r="2.6"/><circle cx="487.4" cy="18.9" r="2.6"/><circle cx="499.4" cy="7.3" r="2.6"/><path d="M492.2 20.900 L491.700 18.600 L497.000 13.700 L499.300 16.000 L494.300 21.200 Z"/><path d="M498.100 12.700 L499.600 11.300 L501.900 13.600 L500.400 15.000 Z"/></g><g fill="none" stroke="#2a6dea" stroke-width="1.6"><path d="M487.400 7.300 V18.900"/><path d="M487.400 7.300 H495.200"/><path d="M492.300 4.400 L495.300 7.300 L492.300 10.300"/></g></svg>
<svg style="left:582.7px;top:3.3px" width="19.9" height="19.9" viewBox="0 0 24 24" fill="#2a6dea"><path d="M19.88 18.47c.44-.7.7-1.510.7-2.390 0-2.490-2.010-4.500-4.500-4.500s-4.500 2.010-4.500 4.500 2.010 4.500 4.490 4.500c.88 0 1.700-.26 2.390-.7L21.580 23 23 21.580l-3.120-3.110zm-3.800.110c-1.380 0-2.500-1.120-2.500-2.500s1.120-2.500 2.500-2.500 2.500 1.120 2.500 2.500-1.120 2.500-2.500 2.500zm-.36-8.500c-.74.020-1.450.18-2.100.45l-.55-.83-3.800 6.180-3.010-3.520-3.630 5.810L1 17l5-8 3 3.500L13 6l2.720 4.080zm2.590.5c-.64-.28-1.330-.45-2.050-.49L21.380 2 23 3.180l-4.690 7.400z"/></svg>
<svg style="left:674px;top:3.3px" width="20" height="20" viewBox="0 0 24 24" fill="#2a6dea"><path d="M18 16.080c-.76 0-1.440.3-1.960.77L8.910 12.700c.05-.23.090-.46.090-.7s-.04-.47-.09-.7l7.050-4.110c.54.5 1.250.81 2.040.81 1.660 0 3-1.340 3-3s-1.340-3-3-3-3 1.340-3 3c0 .24.040.47.090.7L8.040 9.810C7.500 9.310 6.790 9 6 9c-1.660 0-3 1.340-3 3s1.340 3 3 3c.79 0 1.500-.31 2.040-.81l7.120 4.160c-.05.21-.08.43-.08.65 0 1.610 1.310 2.920 2.920 2.920 1.610 0 2.920-1.310 2.920-2.920s-1.310-2.920-2.920-2.920z"/></svg>
<!-- products cube, caret -->
<svg style="left:1420px;top:6px" width="56" height="26" viewBox="1420 6 56 26"><g fill="#5b5b5b"><path d="M1432.8 8.400 L1440.000 12.700 L1432.800 17.000 L1425.600 12.700Z"/><path d="M1423.900 15.000 L1431.800 19.700 V28.500 L1423.900 23.800Z"/><path d="M1433.800 19.700 L1441.900 15.000 V23.800 L1433.800 28.500Z"/></g><path d="M1461.100 19.600 H1472.400 L1466.750 25.300Z" fill="#000"/></svg>
<!-- sparkle -->
<svg style="left:140px;top:68px" width="28" height="26" viewBox="140 68 28 26"><path d="M151.100 75.500 C151.900 80.300 153.200 82.300 159.300 83.200 C153.200 84.100 151.900 86.100 151.100 91.300 C150.300 86.100 149.000 84.100 142.900 83.200 C149.000 82.300 150.300 80.300 151.100 75.500Z" fill="none" stroke="#fff" stroke-width="2.5" stroke-linejoin="round"/><path d="M160.500 70.200 C160.900 73.400 161.900 74.400 165.200 74.800 C161.900 75.200 160.900 76.200 160.500 79.500 C160.100 76.200 159.100 75.200 155.800 74.800 C159.100 74.400 160.100 73.400 160.500 70.200Z" fill="#fff" stroke="#fff" stroke-width="0.9" stroke-linejoin="round"/></svg>
<!-- search + close -->
<svg style="left:44px;top:139px" width="24" height="24" viewBox="44 139 24 24" fill="none" stroke="#868686" stroke-width="1.7"><circle cx="54.3" cy="149.4" r="7.3"/><path d="M59.600 154.700 L65.100 160.200" stroke-linecap="round"/></svg>
<svg style="left:308px;top:143px" width="20" height="20" viewBox="308 143 20 20" fill="none" stroke="#000" stroke-width="2.1"><path d="M310.600 145.400 L325.400 160.000 M325.400 145.400 L310.600 160.000"/></svg>
<!-- select chevron / caret / refresh -->
<svg style="left:674px;top:120px" width="20" height="14" viewBox="674 120 20 14" fill="none" stroke="#000" stroke-width="2.3"><path d="M676.700 123.500 L683.400 130.200 L690.100 123.500"/></svg>
<svg style="left:933px;top:123px" width="16" height="10" viewBox="933 123 16 10"><path d="M935.300 125.000 H946.300 L940.800 130.700Z" fill="#747474"/></svg>
<svg style="left:989.8px;top:116.1px" width="22" height="22" viewBox="0 0 24 24" fill="#fff"><path d="M17.650 6.350C16.200 4.900 14.210 4 12 4c-4.420 0-7.990 3.580-7.990 8s3.570 8 7.990 8c3.730 0 6.840-2.550 7.730-6h-2.080c-.82 2.330-3.040 4-5.650 4-3.310 0-6-2.690-6-6s2.690-6 6-6c1.660 0 3.140.69 4.220 1.780L13 11h7V4l-2.350 2.350z"/></svg>
<!-- radios -->
<div class="a" style="left:405.6px;top:293.4px;width:14.4px;height:14.4px;border-radius:50%;border:1.5px solid #858585;background:#fff"></div>
<div class="a" style="left:506.2px;top:293.4px;width:14.6px;height:14.6px;border-radius:50%;border:1.6px solid #1778f2;background:#fff"></div>
<div class="a" style="left:509.2px;top:296.4px;width:8.6px;height:8.6px;border-radius:50%;background:#1778f2"></div>
<div class="a" style="left:617.5px;top:293.4px;width:14.4px;height:14.4px;border-radius:50%;border:1.5px solid #858585;background:#fff"></div>
<!-- filter icons -->
<svg style="left:523.8px;top:397.7px" width="21.5" height="21.5" viewBox="0 0 24 24" fill="#222"><path d="M10 18h4v-2h-4v2zM3 6v2h18V6H3zm3 7h12v-2H6v2z"/></svg>
<svg style="left:699.2px;top:397.7px" width="21.5" height="21.5" viewBox="0 0 24 24" fill="#222"><path d="M10 18h4v-2h-4v2zM3 6v2h18V6H3zm3 7h12v-2H6v2z"/></svg>
<!-- zoom icons (rows) -->
<svg style="left:872.4px;top:448.4px" width="28.2" height="28.2" viewBox="0 0 24 24" fill="#10131c"><path d="M15.500 14h-.790l-.280-.270C15.410 12.590 16 11.110 16 9.500 16 5.910 13.090 3 9.500 3S3 5.910 3 9.500 5.910 16 9.500 16c1.610 0 3.090-.59 4.230-1.570l.270.280v.79l5 4.990L20.490 19l-4.990-5zm-6 0C7.010 14 5 11.990 5 9.500S7.010 5 9.500 5 14 7.010 14 9.500 11.990 14 9.500 14z"/><path d="M12 10h-2v2H9v-2H7V9h2V7h1v2h2v1z"/></svg>
<svg style="left:872.4px;top:497.6px" width="28.2" height="28.2" viewBox="0 0 24 24" fill="#10131c"><path d="M15.500 14h-.790l-.280-.270C15.410 12.590 16 11.110 16 9.500 16 5.910 13.090 3 9.500 3S3 5.910 3 9.500 5.910 16 9.500 16c1.610 0 3.090-.59 4.230-1.570l.270.280v.79l5 4.990L20.490 19l-4.990-5zm-6 0C7.010 14 5 11.990 5 9.500S7.010 5 9.500 5 14 7.010 14 9.500 11.990 14 9.500 14z"/><path d="M12 10h-2v2H9v-2H7V9h2V7h1v2h2v1z"/></svg>
<svg style="left:872.4px;top:546.8px" width="28.2" height="28.2" viewBox="0 0 24 24" fill="#10131c"><path d="M15.500 14h-.790l-.280-.270C15.410 12.590 16 11.110 16 9.500 16 5.910 13.090 3 9.500 3S3 5.910 3 9.500 5.910 16 9.500 16c1.610 0 3.090-.59 4.230-1.570l.270.280v.79l5 4.990L20.490 19l-4.990-5zm-6 0C7.010 14 5 11.990 5 9.500S7.010 5 9.500 5 14 7.010 14 9.500 11.990 14 9.500 14z"/><path d="M12 10h-2v2H9v-2H7V9h2V7h1v2h2v1z"/></svg>
<svg style="left:872.4px;top:595.9px" width="28.2" height="28.2" viewBox="0 0 24 24" fill="#10131c"><path d="M15.500 14h-.790l-.280-.270C15.410 12.590 16 11.110 16 9.500 16 5.910 13.090 3 9.500 3S3 5.910 3 9.500 5.910 16 9.500 16c1.610 0 3.090-.59 4.230-1.570l.270.280v.79l5 4.990L20.490 19l-4.990-5zm-6 0C7.010 14 5 11.990 5 9.500S7.010 5 9.500 5 14 7.010 14 9.500 11.990 14 9.500 14z"/><path d="M12 10h-2v2H9v-2H7V9h2V7h1v2h2v1z"/></svg>
<!-- scrollbar arrows -->
<svg style="left:386px;top:438px" width="564" height="212" viewBox="386 438 564 212"><path d="M934.400 450.900 H943.900 L939.150 446.200Z" fill="#a3a3a3"/><path d="M934.200 615.200 H944.400 L939.300 620.300Z" fill="#505050"/><path d="M399.000 632.300 V642.300 L394.000 637.300Z" fill="#a3a3a3"/><path d="M830.400 632.300 V642.300 L835.800 637.300Z" fill="#505050"/><path d="M855.200 632.300 V642.300 L850.000 637.300Z" fill="#a3a3a3"/><path d="M917.400 632.300 V642.300 L922.600 637.300Z" fill="#a3a3a3"/></svg>
<!-- pagination chevrons -->
<svg style="left:888px;top:670px" width="56" height="20" viewBox="888 670 56 20" fill="none" stroke="#fff" stroke-width="2"><path d="M897.600 675.200 L893.200 679.600 L897.600 684.000"/><path d="M932.400 675.200 L936.800 679.600 L932.400 684.000"/></svg>
<!-- tooltip zoom icon -->
<svg style="left:1106.3px;top:270.3px" width="28" height="28" viewBox="0 0 24 24" fill="#2b50c0"><path d="M15.500 14h-.790l-.280-.270C15.410 12.590 16 11.110 16 9.500 16 5.910 13.090 3 9.500 3S3 5.910 3 9.500 5.910 16 9.500 16c1.610 0 3.090-.59 4.230-1.570l.270.280v.79l5 4.990L20.490 19l-4.990-5zm-6 0C7.010 14 5 11.990 5 9.500S7.010 5 9.500 5 14 7.010 14 9.500 11.990 14 9.500 14z"/><path d="M12 10h-2v2H9v-2H7V9h2V7h1v2h2v1z"/></svg>
<!-- toolbar icons -->
<svg style="left:1473.8px;top:270.2px" width="28" height="28" viewBox="0 0 24 24" fill="#2b55c7"><path d="M17 15h2V7c0-1.100-.9-2-2-2H9v2h8v8zM7 17V1H5v4H1v2h4v10c0 1.100.9 2 2 2h10v4h2v-4h4v-2H7z"/></svg>
<svg style="left:1473px;top:309.2px" width="28.6" height="28.6" viewBox="0 0 24 24" fill="#d9504f"><path d="M6 19c0 1.100.9 2 2 2h8c1.100 0 2-.9 2-2V7H6v12zM19 4h-3.500l-1-1h-5l-1 1H5v2h14V4z"/></svg>
<svg style="left:1473.8px;top:337.1px" width="28.4" height="28.4" viewBox="0 0 24 24" fill="#2b55c7"><path d="M13 3c-4.970 0-9 4.030-9 9H1l3.890 3.890.07.140L9 12H6c0-3.870 3.130-7 7-7s7 3.130 7 7-3.130 7-7 7c-1.930 0-3.680-.79-4.940-2.060l-1.420 1.420C8.270 19.990 10.510 21 13 21c4.970 0 9-4.030 9-9s-4.030-9-9-9zm-1 5v5l4.280 2.540.72-1.210-3.500-2.080V8H12z"/></svg>
<!-- info + chat -->
<svg style="left:967.5px;top:623.9px" width="27.8" height="27.8" viewBox="0 0 24 24" fill="#000"><path d="M12 2C6.480 2 2 6.480 2 12s4.480 10 10 10 10-4.480 10-10S17.520 2 12 2zm1 15h-2v-6h2v6zm0-8h-2V7h2v2z"/></svg>
<svg style="left:1436px;top:618px" width="76" height="76" viewBox="1436 618 76 76"><circle cx="1473.700" cy="655.800" r="35.100" fill="#4069c4"/><path d="M1456.900 653.600 C1456.900 645.300 1464.200 638.700 1473.300 638.700 C1482.400 638.700 1489.700 645.300 1489.700 653.600 C1489.700 661.400 1484.000 667.600 1476.200 669.600 L1466.400 674.500 L1467.400 669.000 C1461.200 666.600 1456.900 660.600 1456.900 653.600Z" fill="#fff"/><path d="M1471.500 662.300 H1483.100 C1482.300 665.200 1480.000 666.700 1477.300 666.700 C1474.600 666.700 1472.300 665.200 1471.500 662.300Z" fill="#4069c4"/><circle cx="1497.300" cy="632.600" r="11.700" fill="#c2151b"/></svg>


<span class="t" id="n1" style="left:102.00px;top:28.56px;font-size:14.7px;color:#444;transform:scaleX(0.9711);">Add Upload</span>
<span class="t" id="n2" style="left:191.33px;top:28.56px;font-size:14.7px;color:#444;transform:scaleX(0.9747);">Gis Library</span>
<span class="t" id="n3" style="left:275.53px;top:28.56px;font-size:14.7px;color:#444;transform:scaleX(0.9713);">Create Data</span>
<span class="t" id="n4" style="left:368.15px;top:28.56px;font-size:14.7px;color:#444;transform:scaleX(0.9726);">Style Data</span>
<span class="t" id="n5" style="left:449.11px;top:28.56px;font-size:14.7px;color:#444;transform:scaleX(0.9475);">Process Data</span>
<span class="t" id="n6" style="left:548.40px;top:28.56px;font-size:14.7px;color:#444;transform:scaleX(0.9597);">Analyze Data</span>
<span class="t" id="n7" style="left:647.76px;top:28.56px;font-size:14.7px;color:#444;transform:scaleX(0.9541);">Share Map</span>
<span class="t" id="lg1" style="left:18.20px;top:1.85px;font-size:23.8px;color:#1f4f96;font-weight:700;transform:scaleX(0.6731);">Gis Data</span>
<span class="t" id="lg2" style="left:27.84px;top:22.41px;font-size:19.6px;color:#2a5aa0;font-weight:700;transform:scaleX(0.7055);">MAP</span>
<span class="t" id="lg3" style="left:58.02px;top:22.41px;font-size:19.6px;color:#fbc31a;font-weight:700;transform:scaleX(0.6128);-webkit-text-stroke:0.3px #fbc31a;">OG</span>
<span class="t" id="gfd" style="left:962.25px;top:15.46px;font-size:16px;color:#fff;letter-spacing:1.439px;-webkit-text-stroke:0.45px #fff;">Get Free Data</span>
<span class="t" id="h1" style="left:1111.88px;top:14.96px;font-size:15.4px;color:#4a55b8;transform:scaleX(1.0946);">Dashboard</span>
<span class="t" id="h2" style="left:1206.02px;top:14.96px;font-size:15.4px;color:#4a55b8;transform:scaleX(1.0858);">Contact Us</span>
<span class="t" id="h3" style="left:1300.00px;top:14.96px;font-size:15.4px;color:#4a55b8;transform:scaleX(1.0817);">FAQ</span>
<span class="t" id="h4" style="left:1344.95px;top:14.96px;font-size:15.4px;color:#4a55b8;transform:scaleX(1.1221);">Pricing</span>
<span class="t" id="h5" style="left:1409.18px;top:27.75px;font-size:13.5px;color:#3b4cb0;font-family:'Liberation Serif', serif;transform:scaleX(1.0637);">products</span>
<span class="t" id="av" style="left:1495.43px;top:15.30px;font-size:15px;color:#fff;transform:scaleX(1.2563);">N</span>
<span class="t" id="bdg" style="left:1492.63px;top:626.00px;font-size:13px;color:#fff;transform:scaleX(1.1883);">1</span>
<span class="t" id="try" style="left:177.97px;top:70.55px;font-size:21.8px;color:#fff;transform:scaleX(0.9653);-webkit-text-stroke:0.2px #fff;">Try AI</span>
<span class="t" id="srch" style="left:77.14px;top:140.07px;font-size:20px;color:#222;letter-spacing:-0.034px;">National Park</span>
<span class="t" id="adm" style="left:88.69px;top:201.72px;font-size:21.6px;color:#4253ad;font-weight:700;transform:scaleX(0.9228);">Administrative Layer</span>
<span class="t" id="oth" style="left:130.37px;top:273.72px;font-size:21.6px;color:#4253ad;font-weight:700;transform:scaleX(0.9329);">Other Layer</span>
<span class="t" id="bnp" style="left:23.56px;top:321.92px;font-size:19px;color:#fff;transform:scaleX(0.9684);-webkit-text-stroke:0.15px #fff;">Boundaries: National Park</span>
<span class="t" id="sc" style="left:386.33px;top:71.66px;font-size:19.3px;color:#111;font-weight:700;transform:scaleX(0.9005);">Select country</span>
<span class="t" id="fd" style="left:734.35px;top:71.66px;font-size:19.3px;color:#111;font-weight:700;transform:scaleX(0.9550);">Filter Data</span>
<span class="t" id="usa" style="left:404.44px;top:117.26px;font-size:18.6px;color:#2e2e2e;letter-spacing:0.647px;">United states of america</span>
<span class="t" id="ss" style="left:766.02px;top:119.26px;font-size:18.6px;color:#757575;letter-spacing:0.313px;">Select State</span>
<span class="t" id="bnp2" style="left:648.60px;top:185.53px;font-size:23px;color:#3153c0;transform:scaleX(1.0001);">Boundaries: National Park</span>
<span class="t" id="aom" style="left:948.00px;top:187.61px;font-size:17px;color:#fff;letter-spacing:0.957px;-webkit-text-stroke:0.45px #fff;">Add on Map</span>
<span class="t" id="dd" style="left:1098.97px;top:187.61px;font-size:17px;color:#fff;letter-spacing:1.165px;-webkit-text-stroke:0.45px #fff;">Download Data</span>
<span class="t" id="vf" style="left:399.20px;top:266.92px;font-size:19px;color:#111;transform:scaleX(0.9563);">View Filtered Layer Data as :</span>
<span class="t" id="p1" style="left:426.63px;top:294.03px;font-size:16.5px;color:#2d5ba3;transform:scaleX(1.0645);">POINT</span>
<span class="t" id="p1s" style="left:481.43px;top:290.47px;font-size:14.8px;color:#2d5ba3;transform:scaleX(0.8350);">1</span>
<span class="t" id="p2" style="left:528.16px;top:294.10px;font-size:17.6px;color:#1512ee;font-weight:700;transform:scaleX(0.9448);">LINE</span>
<span class="t" id="p2s" style="left:566.77px;top:288.79px;font-size:15.6px;color:#1512ee;font-weight:700;transform:scaleX(0.9627);">5102</span>
<span class="t" id="p3" style="left:639.47px;top:294.03px;font-size:16.5px;color:#2d5ba3;transform:scaleX(1.0341);">POLYGON</span>
<span class="t" id="p3s" style="left:722.86px;top:290.47px;font-size:14.8px;color:#2d5ba3;transform:scaleX(1.0191);">1566</span>
<span class="t" id="c1" style="left:404.76px;top:346.56px;font-size:14.7px;color:#222;transform:scaleX(1.1345);">boundary</span>
<span class="t" id="c2" style="left:580.35px;top:346.56px;font-size:14.7px;color:#222;transform:scaleX(1.1391);">leisure</span>
<span class="t" id="c3" style="left:757.00px;top:346.56px;font-size:14.7px;color:#222;transform:scaleX(1.1554);">tourism</span>
<span class="t" id="c4" style="left:862.40px;top:347.39px;font-size:14.9px;color:#222;transform:scaleX(1.1436);">Action</span>
<span class="t" id="r1" style="left:404.59px;top:458.47px;font-size:14.8px;color:#222;transform:scaleX(1.0911);">national_park</span>
<span class="t" id="r2" style="left:404.59px;top:507.47px;font-size:14.8px;color:#222;transform:scaleX(1.0911);">national_park</span>
<span class="t" id="r3" style="left:404.59px;top:556.47px;font-size:14.8px;color:#222;transform:scaleX(1.0911);">national_park</span>
<span class="t" id="r4" style="left:404.59px;top:605.47px;font-size:14.8px;color:#222;transform:scaleX(1.0911);">national_park</span>
<span class="t" id="r4b" style="left:580.21px;top:605.47px;font-size:14.8px;color:#222;transform:scaleX(1.0671);">nature_reserve</span>
<span class="t" id="ipp" style="left:397.17px;top:670.46px;font-size:16px;color:#fff;transform:scaleX(0.9871);-webkit-text-stroke:0.25px #fff;">Items per Page: 200</span>
<span class="t" id="ent" style="left:706.20px;top:670.46px;font-size:16px;color:#fff;letter-spacing:0.718px;-webkit-text-stroke:0.25px #fff;">1 - 200 of 5102 entries</span>
<span class="t" id="pg" style="left:911.44px;top:669.03px;font-size:16.5px;color:#fff;font-weight:700;transform:scaleX(0.9309);">1</span>
<span class="t" id="tt1" style="left:991.57px;top:284.54px;font-size:15.9px;color:#3153c0;transform:scaleX(0.9876);">Please Click On</span>
<span class="t" id="tt2" style="left:1137.90px;top:284.54px;font-size:15.9px;color:#3153c0;transform:scaleX(1.0038);">Action On Data Table To View Data</span>
</body></html>
